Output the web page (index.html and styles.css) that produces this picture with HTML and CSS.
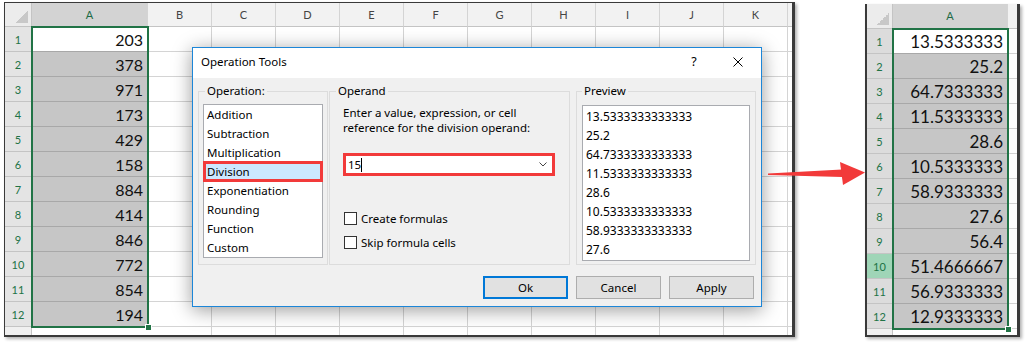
FILE: index.html
```html
<!DOCTYPE html>
<html>
<head>
  <meta charset="utf-8">
  <link rel="stylesheet" href="styles.css">
</head>
<body>
  <!-- sheet before the operation -->
  <div class="sheet sheet-before">
    <div class="row-heads">
      <div class="corner"></div>
      <div class="row-head">1</div>
      <div class="row-head">2</div>
      <div class="row-head">3</div>
      <div class="row-head">4</div>
      <div class="row-head">5</div>
      <div class="row-head">6</div>
      <div class="row-head">7</div>
      <div class="row-head">8</div>
      <div class="row-head">9</div>
      <div class="row-head">10</div>
      <div class="row-head">11</div>
      <div class="row-head">12</div>
      <div class="row-head plain">13</div>
    </div>
    <div class="col-a">
      <div class="col-head selected">A</div>
      <div class="selection">
        <div class="cell active">203</div>
        <div class="cell">378</div>
        <div class="cell">971</div>
        <div class="cell">173</div>
        <div class="cell">429</div>
        <div class="cell">158</div>
        <div class="cell">884</div>
        <div class="cell">414</div>
        <div class="cell">846</div>
        <div class="cell">772</div>
        <div class="cell">854</div>
        <div class="cell">194</div>
        <span class="fill-handle"></span>
      </div>
      <div class="cell tail"></div>
    </div>
    <div class="rest">
      <div class="col-heads">
        <div class="col-head">B</div>
        <div class="col-head">C</div>
        <div class="col-head">D</div>
        <div class="col-head">E</div>
        <div class="col-head">F</div>
        <div class="col-head">G</div>
        <div class="col-head">H</div>
        <div class="col-head">I</div>
        <div class="col-head">J</div>
        <div class="col-head">K</div>
        <div class="col-head"></div>
      </div>
      <div class="blank"></div>
    </div>
  </div>

  <div class="dialog">
    <div class="titlebar">
      <span class="title">Operation Tools</span>
      <span class="help">?</span>
      <svg class="close" viewBox="0 0 10 10" width="10" height="10">
        <path d="M0.5 0.5L9.5 9.5M9.5 0.5L0.5 9.5" stroke="#000" stroke-width="1" fill="none" />
      </svg>
    </div>
    <div class="dialog-body">
      <div class="groups">
        <fieldset class="group group-op">
          <legend>Operation:</legend>
          <ul class="listbox">
            <li>Addition</li>
            <li>Subtraction</li>
            <li>Multiplication</li>
            <li class="selected">Division</li>
            <li>Exponentiation</li>
            <li>Rounding</li>
            <li>Function</li>
            <li>Custom</li>
          </ul>
        </fieldset>
        <fieldset class="group group-operand">
          <legend>Operand</legend>
          <p class="hint">Enter a value, expression, or cell<br>reference for the division operand:</p>
          <div class="combo">
            <span class="combo-value">15</span><span class="caret"></span>
            <svg class="chevron" viewBox="0 0 8 5" width="8" height="5">
              <path d="M0.5 0.5L4 4L7.5 0.5" stroke="#444" stroke-width="1" fill="none" />
            </svg>
          </div>
          <label class="check first"><span class="box"></span>Create formulas</label>
          <label class="check"><span class="box"></span>Skip formula cells</label>
        </fieldset>
        <fieldset class="group group-preview">
          <legend>Preview</legend>
          <ul class="listbox preview">
            <li>13.5333333333333</li>
            <li>25.2</li>
            <li>64.7333333333333</li>
            <li>11.5333333333333</li>
            <li>28.6</li>
            <li>10.5333333333333</li>
            <li>58.9333333333333</li>
            <li>27.6</li>
          </ul>
        </fieldset>
      </div>
      <div class="buttons">
        <button class="btn default">Ok</button>
        <button class="btn">Cancel</button>
        <button class="btn">Apply</button>
      </div>
    </div>
  </div>

  <svg class="arrow" viewBox="0 0 110 45" width="110" height="45">
    <polygon points="8,23.5 82,19.5 82,27 8,25" fill="#f23a3a" />
    <polygon points="80,12 105,22.5 83,35" fill="#f23a3a" />
  </svg>

  <!-- sheet after the operation -->
  <div class="sheet sheet-after">
    <div class="row-heads">
      <div class="corner"></div>
      <div class="row-head">1</div>
      <div class="row-head">2</div>
      <div class="row-head">3</div>
      <div class="row-head">4</div>
      <div class="row-head">5</div>
      <div class="row-head">6</div>
      <div class="row-head">7</div>
      <div class="row-head">8</div>
      <div class="row-head">9</div>
      <div class="row-head current">10</div>
      <div class="row-head">11</div>
      <div class="row-head">12</div>
      <div class="row-head plain">13</div>
    </div>
    <div class="col-a">
      <div class="col-head selected">A</div>
      <div class="selection">
        <div class="cell active">13.5333333</div>
        <div class="cell">25.2</div>
        <div class="cell">64.7333333</div>
        <div class="cell">11.5333333</div>
        <div class="cell">28.6</div>
        <div class="cell">10.5333333</div>
        <div class="cell">58.9333333</div>
        <div class="cell">27.6</div>
        <div class="cell">56.4</div>
        <div class="cell">51.4666667</div>
        <div class="cell">56.9333333</div>
        <div class="cell">12.9333333</div>
        <span class="fill-handle"></span>
      </div>
      <div class="cell tail"></div>
    </div>
    <div class="rest">
      <div class="col-heads">
        <div class="col-head"></div>
      </div>
      <div class="blank"></div>
    </div>
  </div>
</body>
</html>
```

FILE: styles.css
```css
* {
  box-sizing: border-box;
}

body {
  margin: 0;
  width: 1025px;
  height: 342px;
  overflow: hidden;
  position: relative;
  background: #fff;
  display: flex;
  align-items: flex-start;
  font-family: Lato, "Liberation Sans", sans-serif;
}

/* spreadsheet panels */

.sheet {
  display: flex;
  flex: none;
  overflow: hidden;
  background: #fff;
  border: 1px solid #3a3a3a;
  border-right-width: 3px;
  border-bottom-width: 2px;
  box-shadow: 2px 2px 3px rgba(0,0,0,0.3);
}

.sheet-before {
  margin: 2px 0 0 4px;
  width: 791px;
  height: 335px;
}

.sheet-after {
  margin: 4px 0 0 70px;
  width: 155px;
  height: 333px;
  border-top: 0;
  border-left-width: 2px;
}

.row-heads {
  width: 27px;
  flex: none;
  display: flex;
  flex-direction: column;
  background: #e4e4e4;
  border-right: 1px solid #c4c4c4;
}

.sheet-after .row-heads {
  width: 26px;
  background: #dcdcdc;
}

.corner {
  flex: none;
  height: 24px;
  border-bottom: 1px solid #c4c4c4;
  background: linear-gradient(135deg, transparent 50%, #c8c8c8 50%) right 3px bottom 3px / 12px 12px no-repeat, #ececec;
}

.sheet-after .corner {
  height: 25px;
}

.row-head {
  flex: none;
  height: 25px;
  line-height: 26px;
  text-align: center;
  font-size: 11px;
  color: #217346;
  border-bottom: 1px solid #c4c4c4;
}

.row-head.plain {
  color: #555;
  background: #f0f0f0;
}

.row-head.current {
  background: #9fd5b7;
}

.col-a {
  width: 116px;
  flex: none;
  display: flex;
  flex-direction: column;
}

.sheet-after .col-a {
  width: 115px;
}

.col-head {
  flex: none;
  height: 24px;
  line-height: 24px;
  text-align: center;
  font-size: 11px;
  color: #444;
  background: #f2f2f2;
  border-bottom: 1px solid #c4c4c4;
  border-right: 1px solid #d4d4d4;
}

.sheet-after .col-head {
  height: 25px;
}

.col-head.selected {
  background: #d3d3d3;
  color: #1e6b45;
}

.selection {
  position: relative;
  outline: 2px solid #217346;
  outline-offset: -1px;
}

.cell {
  height: 25px;
  line-height: 25px;
  padding-right: 5px;
  text-align: right;
  font-size: 16px;
  color: #111;
  background: #c6c6c6;
  border-bottom: 1px solid #a8a8a8;
}

.sheet-after .cell {
  font-size: 17px;
}

.cell.active {
  background: #fff;
}

.cell.tail {
  flex: none;
  background: #fff;
  border-bottom-color: #d4d4d4;
}

.fill-handle {
  position: absolute;
  right: -4px;
  bottom: -4px;
  width: 7px;
  height: 7px;
  background: #217346;
  border: 1px solid #fff;
}

.rest {
  flex: 1;
  display: flex;
  flex-direction: column;
}

.col-heads {
  display: flex;
  flex: none;
}

.col-heads .col-head {
  width: 64px;
}

.blank {
  flex: 1;
  background-image:
    linear-gradient(to right, transparent 63px, #d4d4d4 63px),
    linear-gradient(to bottom, transparent 24px, #d4d4d4 24px);
  background-size: 64px 25px;
}

/* dialog */

.dialog {
  position: absolute;
  left: 192px;
  top: 47px;
  width: 570px;
  height: 260px;
  display: flex;
  flex-direction: column;
  border: 1px solid #1c86d8;
  background: #f0f0f0;
  box-shadow: 0 3px 18px rgba(0,0,0,0.4);
  font-family: "Noto Sans", sans-serif;
  font-size: 11.5px;
  color: #000;
}

.titlebar {
  height: 30px;
  flex: none;
  display: flex;
  align-items: center;
  padding: 0 0 3px 8px;
  background: #fff;
}

.title {
  flex: 1;
}

.help {
  width: 20px;
  margin-right: 29px;
  text-align: center;
  font-size: 12.5px;
}

.close {
  margin-right: 18px;
}

.dialog-body {
  flex: 1;
  padding: 5px 5px 7px 5px;
}

.groups {
  display: flex;
}

.group {
  margin: 0;
  height: 182px;
  min-width: 0;
  flex: none;
  border: 1px solid #dcdcdc;
  padding: 5px 4px 0 4px;
}

.group legend {
  padding: 0 2px;
  margin-left: 2px;
  line-height: 16px;
}

.group-op {
  width: 130px;
  margin-right: 1px;
}

.group-operand {
  width: 241px;
  margin-right: 6px;
}

.group-preview {
  width: 180px;
  padding: 6px 5px 0 5px;
}

.group-preview legend {
  margin-left: 0;
}

.listbox {
  list-style: none;
  margin: 0;
  padding: 0;
  background: #fff;
  border: 1px solid #a9abb0;
}

.listbox li {
  height: 19px;
  line-height: 19px;
  padding-left: 3px;
  white-space: nowrap;
}

.listbox li.selected {
  background: #cce8ff;
  outline: 3px solid #f23a3a;
  outline-offset: -2px;
}

.listbox.preview {
  height: 156px;
  padding-top: 1px;
  font-size: 12px;
}

.hint {
  margin: 1px 0 0 9px;
  line-height: 15px;
}

.combo {
  margin: 18px 0 0 9px;
  width: 212px;
  height: 23px;
  display: flex;
  align-items: center;
  padding-left: 2px;
  background: #fff;
  border: 3px solid #f23a3a;
}

.caret {
  width: 1px;
  height: 14px;
  background: #000;
}

.chevron {
  margin-left: auto;
  margin-right: 5px;
}

.check {
  display: flex;
  align-items: center;
  gap: 4px;
  height: 13px;
  margin: 11px 0 0 10px;
}

.check.first {
  margin-top: 36px;
}

.box {
  width: 13px;
  height: 13px;
  border: 1px solid #333;
  background: #fff;
}

.buttons {
  display: flex;
  justify-content: flex-end;
  gap: 8px;
  margin-top: 11px;
  padding-right: 2px;
}

.btn {
  width: 85px;
  height: 23px;
  padding: 0;
  font: inherit;
  color: #000;
  background: #e1e1e1;
  border: 1px solid #adadad;
}

.btn.default {
  border: 2px solid #0078d7;
}

/* annotation arrow */

.arrow {
  position: absolute;
  left: 760px;
  top: 150px;
}
```
